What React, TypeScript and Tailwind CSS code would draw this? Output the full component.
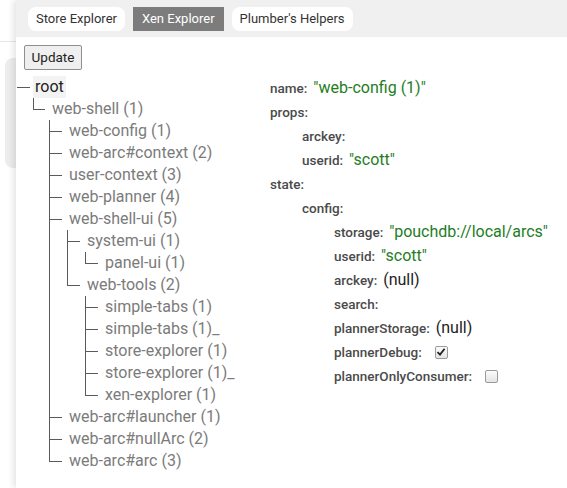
import React from "react";

type N = { label: string; children?: N[] };

const tree: N = {
  label: "web-shell (1)",
  children: [
    { label: "web-config (1)" },
    { label: "web-arc#context (2)" },
    { label: "user-context (3)" },
    { label: "web-planner (4)" },
    {
      label: "web-shell-ui (5)",
      children: [
        { label: "system-ui (1)", children: [{ label: "panel-ui (1)" }] },
        {
          label: "web-tools (2)",
          children: [
            { label: "simple-tabs (1)" },
            { label: "simple-tabs (1)_" },
            { label: "store-explorer (1)" },
            { label: "store-explorer (1)_" },
            { label: "xen-explorer (1)" },
          ],
        },
      ],
    },
    { label: "web-arc#launcher (1)" },
    { label: "web-arc#nullArc (2)" },
    { label: "web-arc#arc (3)" },
  ],
};

function Children({ nodes, top }: { nodes: N[]; top?: boolean }) {
  return (
    <div>
      {nodes.map((n, i) => {
        const last = i === nodes.length - 1;
        return (
          <div key={n.label} className={top ? "relative pl-[19px]" : "relative pl-[20px]"}>
            <span
              className={
                last
                  ? "absolute left-0 top-0 h-[11px] w-px bg-[#5a5a5a]"
                  : "absolute left-0 top-0 bottom-0 w-px bg-[#5a5a5a]"
              }
            />
            <span
              className={
                top
                  ? "absolute left-0 top-[11px] h-px w-[12px] bg-[#5a5a5a]"
                  : "absolute left-0 top-[11px] h-px w-[13px] bg-[#5a5a5a]"
              }
            />
            <div className="h-[22px] flex items-center whitespace-nowrap text-[16px] text-[#7b7b7b]">
              {n.label}
            </div>
            {n.children && (
              <div className={top ? "ml-[-3px]" : "ml-[-2px]"}>
                <Children nodes={n.children} />
              </div>
            )}
          </div>
        );
      })}
    </div>
  );
}

function Check({ checked }: { checked?: boolean }) {
  return (
    <span className="ml-[7px] inline-flex w-[13px] h-[13px] rounded-[2px] border border-[#9a9a9a] bg-gradient-to-b from-[#fcfcfc] to-[#e4e4e4] items-center justify-center">
      {checked && (
        <svg width="10" height="10" viewBox="0 0 10 10">
          <path d="M1.5 5.2 L4 7.6 L8.6 1.8" stroke="#222" strokeWidth="1.8" fill="none" />
        </svg>
      )}
    </span>
  );
}

type Row = { indent: number; label: string; value?: React.ReactNode };

const G = ({ children }: { children: React.ReactNode }) => (
  <span className="text-[16px] text-[#1e7d1e] font-normal">{children}</span>
);
const Nul = () => <span className="text-[16px] text-[#222] font-normal">(null)</span>;

const rows: Row[] = [
  { indent: 0, label: "name:", value: <G>"web-config (1)"</G> },
  { indent: 0, label: "props:" },
  { indent: 1, label: "arckey:" },
  { indent: 1, label: "userid:", value: <G>"scott"</G> },
  { indent: 0, label: "state:" },
  { indent: 1, label: "config:" },
  { indent: 2, label: "storage:", value: <G>"pouchdb://local/arcs"</G> },
  { indent: 2, label: "userid:", value: <G>"scott"</G> },
  { indent: 2, label: "arckey:", value: <Nul /> },
  { indent: 2, label: "search:" },
  { indent: 2, label: "plannerStorage:", value: <Nul /> },
  { indent: 2, label: "plannerDebug:", value: <Check checked /> },
  { indent: 2, label: "plannerOnlyConsumer:", value: <Check /> },
];

const indentCls = ["pl-0", "pl-[32px]", "pl-[64px]"];

export default function App() {
  return (
    <div
      className="flex w-[567px] h-[488px] overflow-hidden bg-white"
      style={{ fontFamily: "Roboto, 'Liberation Sans', sans-serif" }}
    >
      {/* background app strip */}
      <div className="w-[16px] shrink-0 flex flex-col bg-white">
        <div className="h-[42px] border-b border-[#e6e6e6]" />
        <div className="h-[16px]" />
        <div className="ml-[5px] h-[110px] rounded-l-[8px] bg-[#ededed]" />
      </div>
      {/* main panel */}
      <div className="flex-1 flex flex-col bg-white shadow-[-3px_0_6px_rgba(0,0,0,0.10)] z-10">
        <div className="h-[37px] bg-[#f0f0f0] flex items-center gap-[8px] pl-[12px] text-[13px] text-[#333]">
          <div className="h-[24px] px-[8px] rounded-[8px] bg-white flex items-center">Store Explorer</div>
          <div className="h-[24px] px-[9px] bg-[#7c7c7c] text-white flex items-center">Xen Explorer</div>
          <div className="h-[24px] px-[8px] rounded-[8px] bg-white flex items-center">Plumber's Helpers</div>
        </div>
        <div className="pt-[8px] pl-[8px]">
          <button className="h-[25px] w-[58px] border border-[#8f8f8f] rounded-[2px] bg-[#efefef] text-[13.5px] text-[#222]">
            Update
          </button>
        </div>
        <div className="flex mt-[6px]">
          <div className="w-[254px] shrink-0">
            <div className="relative pl-[17px]">
              <span className="absolute left-[1px] top-[11px] h-px w-[13px] bg-[#5a5a5a]" />
              <div className="h-[22px] flex items-center">
                <span className="h-[22px] flex items-center px-[2px] bg-[#f3f3f3] text-[16px] text-[#222]">root</span>
              </div>
              <Children nodes={[tree]} top />
            </div>
          </div>
          <div className="flex flex-col">
            {rows.map((r, i) => (
              <div
                key={i}
                className={`h-[24px] flex items-center gap-[6px] whitespace-nowrap ${indentCls[r.indent]}`}
              >
                <span className="text-[13.5px] font-medium text-[#4a4a4a]">{r.label}</span>
                {r.value}
              </div>
            ))}
          </div>
        </div>
      </div>
    </div>
  );
}
